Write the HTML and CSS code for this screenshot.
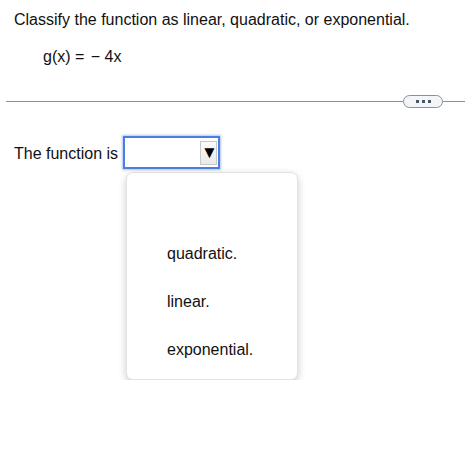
FILE: index.html
```html
<!DOCTYPE html>
<html lang="en">

<head>
  <meta charset="UTF-8" />
  <meta name="viewport" content="width=device-width, initial-scale=1.0" />
  <title>Classify the function</title>
  <link rel="stylesheet" href="styles.css">
</head>

<body>
  <div class="question">
    <p class="prompt">Classify the function as linear, quadratic, or exponential.</p>
    <p class="formula">g(x) = <span class="minus">&minus;</span> 4x</p>
  </div>
  <div class="divider">
    <span class="rule"></span>
    <button class="more"><span></span><span></span><span></span></button>
    <span class="rule short"></span>
  </div>
  <div class="answer">
    <span class="label">The function is</span>
    <div class="select">
      <span class="arrow">&#9660;</span>
    </div>
  </div>
  <div class="options">
    <div class="option">quadratic.</div>
    <div class="option">linear.</div>
    <div class="option">exponential.</div>
  </div>
</body>

</html>
```
FILE: styles.css
```css
* {
  box-sizing: border-box;
}

body {
  margin: 0;
  font-family: "Liberation Sans", Arial, sans-serif;
  font-size: 16px;
  color: #111;
  background: #fff;
}

.question {
  padding: 11px 14px 0 14px;
}

.question p {
  margin: 0;
  line-height: 18px;
}

.formula {
  padding: 19px 0 0 29px;
}

.formula .minus {
  margin-left: 2px;
}

.divider {
  display: flex;
  align-items: center;
  padding: 0 5px 0 6px;
  margin-top: 29px;
  height: 12px;
}

.rule {
  flex: 1;
  height: 1px;
  background: #8a9099;
}

.rule.short {
  flex: 0 0 22px;
}

.more {
  appearance: none;
  width: 40px;
  height: 13px;
  border: 1px solid #8a9099;
  border-radius: 7px;
  background: #f3f5f8;
  display: flex;
  align-items: center;
  justify-content: center;
  gap: 3px;
  padding: 0;
}

.more span {
  width: 3px;
  height: 3px;
  background: #4a5563;
}

.answer {
  display: flex;
  align-items: center;
  padding: 29px 0 0 14px;
}

.label {
  margin-right: 5px;
  line-height: 18px;
  padding-top: 3px;
}

.select {
  width: 97px;
  height: 33px;
  border: 2px solid #4a7fe0;
  box-shadow: 0 0 2px 1px rgba(110, 150, 230, 0.55);
  background: #fff;
  display: flex;
  justify-content: flex-end;
  align-items: center;
  padding-right: 1px;
}

.arrow {
  width: 17px;
  height: 24px;
  border: 1px solid #c8c8c8;
  background: linear-gradient(#fbfbfb, #e9e9e9);
  font-size: 17px;
  line-height: 22px;
  text-align: center;
  color: #000;
}

.options {
  margin: 3px 0 0 126px;
  width: 172px;
  height: 208px;
  padding: 72px 0 0 40px;
  background: #fff;
  border: 1px solid #e2e2e2;
  border-radius: 7px;
  box-shadow: 0 3px 8px rgba(0, 0, 0, 0.2);
}

.option {
  line-height: 18px;
  margin-bottom: 30px;
}
```
